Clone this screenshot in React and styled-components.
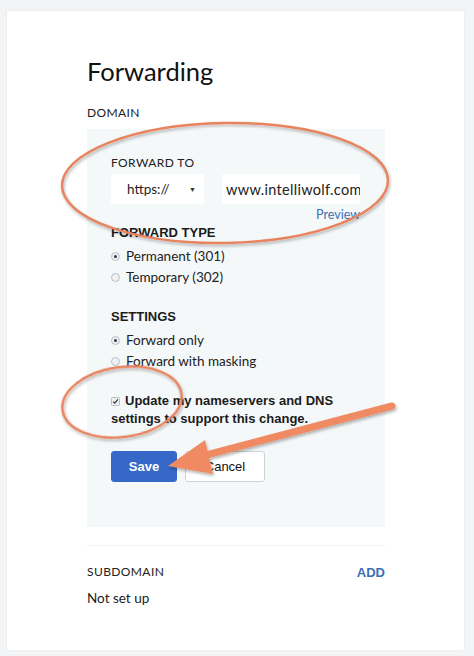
import React from "react";
import styled, { createGlobalStyle } from "styled-components";

const Global = createGlobalStyle`
  html, body { margin: 0; padding: 0; background: #f2f4f5; }
  body { font-family: "Lato", "Open Sans", sans-serif; color: #1b1b1b; }
  * { box-sizing: border-box; }
`;

const Page = styled.div`
  width: 474px;
  height: 656px;
  padding: 11px 10px 6px 7px;
  position: relative;
`;

const Card = styled.div`
  background: #ffffff;
  height: 639px;
  box-shadow: 0 0 2px rgba(0, 0, 0, 0.08);
  padding: 44px 0 0 80px;
`;

const Title = styled.h1`
  margin: 0;
  font-size: 25.5px;
  font-weight: 400;
  line-height: 32px;
  color: #111;
`;

const Label = styled.div`
  font-size: 12px;
  letter-spacing: 0.4px;
  line-height: 16px;
  color: #222;
  margin-top: ${(p) => p.mt || 0}px;
`;

const Panel = styled.div`
  margin-top: 8px;
  width: 298px;
  height: 398px;
  background: #f5f8f9;
  padding: 26px 24px 0 24px;
`;

const FieldRow = styled.div`
  display: flex;
  gap: 18px;
  margin-top: 3px;
`;

const Select = styled.div`
  width: 93px;
  height: 30px;
  background: #fff;
  border-radius: 2px;
  display: flex;
  align-items: center;
  justify-content: space-between;
  padding: 0 8px 0 16px;
  font-size: 13.5px;
  color: #222;
`;

const Caret = styled.span`
  font-size: 7px;
  color: #333;
`;

const Input = styled.div`
  width: 138px;
  height: 30px;
  background: #fff;
  border-radius: 2px;
  display: flex;
  align-items: center;
  padding-left: 4px;
  font-size: 14.5px;
  letter-spacing: 0.3px;
  color: #222;
  white-space: nowrap;
  overflow: hidden;
`;

const PreviewRow = styled.div`
  width: 249px;
  display: flex;
  justify-content: flex-end;
  font-size: 12.5px;
  color: #3b6fb5;
  line-height: 16px;
  margin-top: 3px;
`;

const SectionTitle = styled.div`
  font-family: "Liberation Sans", Arial, sans-serif;
  font-weight: 700;
  font-size: 13px;
  line-height: 16px;
  color: #1b1b1b;
  margin-top: ${(p) => p.mt || 0}px;
`;

const OptionList = styled.div`
  display: flex;
  flex-direction: column;
  gap: 5px;
  margin-top: 7px;
`;

const Option = styled.div`
  display: flex;
  align-items: center;
  gap: 6px;
  font-size: 13.5px;
  line-height: 16px;
  color: #222;
`;

const Radio = styled.span`
  width: 9px;
  height: 9px;
  border-radius: 50%;
  border: 1px solid #b9bec2;
  background: #eef0f2;
  display: inline-flex;
  align-items: center;
  justify-content: center;
  &::after {
    content: "";
    width: 3px;
    height: 3px;
    border-radius: 50%;
    background: ${(p) => (p.checked ? "#333" : "transparent")};
  }
`;

const CheckRow = styled.div`
  margin-top: 23px;
  font-family: "Liberation Sans", Arial, sans-serif;
  font-weight: 700;
  font-size: 13px;
  line-height: 18px;
  color: #1b1b1b;
  width: 240px;
`;

const Check = styled.svg`
  display: inline-block;
  width: 9px;
  height: 9px;
  margin-right: 5px;
  vertical-align: -1px;
`;

const Buttons = styled.div`
  display: flex;
  gap: 8px;
  margin-top: 23px;
`;

const Button = styled.button`
  height: 31px;
  width: ${(p) => p.w}px;
  border-radius: 3px;
  font-family: "Liberation Sans", Arial, sans-serif;
  font-size: 13px;
  font-weight: ${(p) => (p.primary ? 700 : 400)};
  background: ${(p) => (p.primary ? "#3568c8" : "#fff")};
  color: ${(p) => (p.primary ? "#fff" : "#111")};
  border: 1px solid ${(p) => (p.primary ? "#3568c8" : "#cfd3d6")};
  padding: 0;
`;

const Divider = styled.div`
  width: 298px;
  height: 1px;
  background: #f0f2f3;
  margin-top: 18px;
`;

const SubRow = styled.div`
  width: 298px;
  display: flex;
  justify-content: space-between;
  align-items: center;
  margin-top: 18px;
`;

const Add = styled.span`
  font-family: "Liberation Sans", Arial, sans-serif;
  font-weight: 700;
  font-size: 13px;
  color: #3b6fb5;
`;

const Plain = styled.div`
  font-size: 13.5px;
  line-height: 16px;
  color: #1b1b1b;
  margin-top: 10px;
`;

const Overlay = styled.svg`
  position: absolute;
  left: 0;
  top: 0;
  pointer-events: none;
`;

export default function App() {
  return (
    <Page>
      <Global />
      <Card>
        <Title>Forwarding</Title>
        <Label mt={18}>DOMAIN</Label>
        <Panel>
          <Label>FORWARD TO</Label>
          <FieldRow>
            <Select>
              <span>https://</span>
              <Caret>▼</Caret>
            </Select>
            <Input>www.intelliwolf.com</Input>
          </FieldRow>
          <PreviewRow>Preview</PreviewRow>
          <SectionTitle mt={2}>FORWARD TYPE</SectionTitle>
          <OptionList>
            <Option><Radio checked />Permanent (301)</Option>
            <Option><Radio />Temporary (302)</Option>
          </OptionList>
          <SectionTitle mt={24}>SETTINGS</SectionTitle>
          <OptionList>
            <Option><Radio checked />Forward only</Option>
            <Option><Radio />Forward with masking</Option>
          </OptionList>
          <CheckRow>
            <Check viewBox="0 0 9 9">
              <rect x="0.5" y="0.5" width="8" height="8" rx="1" fill="#eef0f2" stroke="#b9bec2" />
              <path d="M2.2 4.6 L3.8 6.2 L6.9 2.4" fill="none" stroke="#333" strokeWidth="1.2" />
            </Check>
            Update my nameservers and DNS settings to support this change.
          </CheckRow>
          <Buttons>
            <Button primary w={66}>Save</Button>
            <Button w={80}>Cancel</Button>
          </Buttons>
        </Panel>
        <Divider />
        <SubRow>
          <Label>SUBDOMAIN</Label>
          <Add>ADD</Add>
        </SubRow>
        <Plain>Not set up</Plain>
      </Card>
      <Overlay width="474" height="656" viewBox="0 0 474 656">
        <defs>
          <filter id="sh" x="-20%" y="-20%" width="140%" height="140%">
            <feDropShadow dx="1" dy="2" stdDeviation="1.5" floodColor="#000" floodOpacity="0.3" />
          </filter>
        </defs>
        <g filter="url(#sh)" fill="none" stroke="#e8835f" strokeWidth="2.5">
          <ellipse cx="225" cy="183" rx="163" ry="60" transform="rotate(-1 225 183)" />
          <ellipse cx="122" cy="402" rx="60" ry="35" transform="rotate(-8 122 402)" />
        </g>
        <g filter="url(#sh)">
          <line x1="392" y1="406" x2="195" y2="458" stroke="#ef8a63" strokeWidth="7" strokeLinecap="round" />
          <polygon points="168,466 205,440 213,474" fill="#ef8a63" />
        </g>
      </Overlay>
    </Page>
  );
}
